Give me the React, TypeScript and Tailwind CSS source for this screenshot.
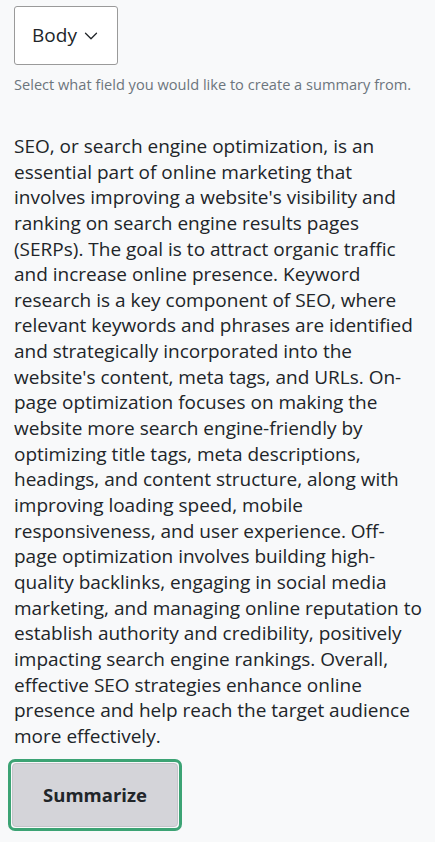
import { ChevronDown } from "lucide-react";

const lines = [
  "SEO, or search engine optimization, is an",
  "essential part of online marketing that",
  "involves improving a website's visibility and",
  "ranking on search engine results pages",
  "(SERPs). The goal is to attract organic traffic",
  "and increase online presence. Keyword",
  "research is a key component of SEO, where",
  "relevant keywords and phrases are identified",
  "and strategically incorporated into the",
  "website's content, meta tags, and URLs. On-",
  "page optimization focuses on making the",
  "website more search engine-friendly by",
  "optimizing title tags, meta descriptions,",
  "headings, and content structure, along with",
  "improving loading speed, mobile",
  "responsiveness, and user experience. Off-",
  "page optimization involves building high-",
  "quality backlinks, engaging in social media",
  "marketing, and managing online reputation to",
  "establish authority and credibility, positively",
  "impacting search engine rankings. Overall,",
  "effective SEO strategies enhance online",
  "presence and help reach the target audience",
  "more effectively.",
];

export default function App() {
  return (
    <div className="min-h-[842px] bg-[#f8f9fa] px-[14px] pt-[6px] font-['Open_Sans',sans-serif] text-[#212529]">
      <button className="flex h-[59px] w-[104px] items-center justify-center gap-[3px] rounded-[3px] border border-[#9a9a9a] bg-white pl-[2px] text-[19px] text-[#212529]">
        Body
        <ChevronDown className="h-[22px] w-[22px]" strokeWidth={1.4} />
      </button>
      <p className="mt-[9px] whitespace-nowrap text-[14.6px] text-[#6c757d]">
        Select what field you would like to create a summary from.
      </p>

      <div className="mt-[38px] text-[19px] leading-[25.65px]">
        {lines.map((l, i) => (
          <span key={i} className="block whitespace-nowrap">
            {l}
          </span>
        ))}
      </div>

      <button className="mt-[9px] -ml-[6px] rounded-[7px] border-[3px] border-[#3ca374] p-px">
        <span className="flex h-[64px] w-[166px] items-center justify-center rounded-[4px] border border-[#c4c4ca] bg-[#d4d4d9] text-[18.5px] font-bold text-[#212529]">
          Summarize
        </span>
      </button>
    </div>
  );
}
